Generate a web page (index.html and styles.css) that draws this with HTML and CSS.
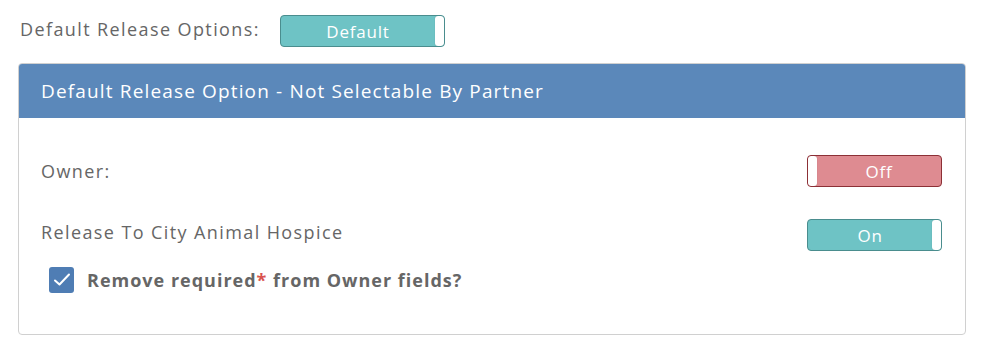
FILE: index.html
```html
<!DOCTYPE html>
<html>
<head>
<meta charset="utf-8">
<link rel="stylesheet" href="styles.css">
</head>
<body>
<div class="page">
  <div class="top-row">
    <span class="top-label">Default Release Options:</span>
    <div class="toggle toggle-teal toggle-default">
      <span class="toggle-text">Default</span>
      <span class="knob"></span>
    </div>
  </div>
  <div class="panel">
    <div class="panel-header">Default Release Option - Not Selectable By Partner</div>
    <div class="panel-body">
      <div class="row">
        <span class="row-label">Owner:</span>
        <div class="toggle toggle-red toggle-wide">
          <span class="knob"></span>
          <span class="toggle-text">Off</span>
        </div>
      </div>
      <div class="row">
        <span class="row-label row-label-high">Release To City Animal Hospice</span>
        <div class="toggle toggle-teal toggle-wide">
          <span class="toggle-text">On</span>
          <span class="knob"></span>
        </div>
      </div>
      <div class="check-row">
        <span class="checkbox">
          <svg width="20" height="20" viewBox="0 0 20 20"><path d="M3 10.5 L7.5 14.5 L17 4.5" fill="none" stroke="#fff" stroke-width="2" stroke-linecap="round" stroke-linejoin="round"/></svg>
        </span>
        <span class="check-label">Remove required<span class="req">*</span> from Owner fields?</span>
      </div>
    </div>
  </div>
</div>
</body>
</html>
```
FILE: styles.css
```css
* { box-sizing: border-box; }
html, body { margin: 0; padding: 0; background: #fff; }
body { font-family: "Open Sans", "DejaVu Sans", sans-serif; color: #666; }
.page { padding: 15px 32px 0 18px; }
.top-row { display: flex; align-items: center; height: 32px; padding-left: 2px; }
.top-label { font-size: 18px; letter-spacing: 1.4px; color: #666; width: 260px; margin-bottom: 4px; }
.toggle {
  display: flex; align-items: stretch; height: 32px;
  border: 1px solid; border-radius: 4px; overflow: hidden;
  color: #fff; font-size: 17px; letter-spacing: 0.8px;
}
.toggle-default { width: 165px; }
.toggle-wide { width: 135px; }
.toggle-teal { background: #6ec3c5; border-color: #4a8d8e; }
.toggle-red { background: #de8b91; border-color: #8c3036; }
.toggle-text { flex: 1; display: flex; align-items: center; justify-content: center; }
.knob { width: 9px; background: #fff; border-radius: 3px; box-shadow: 0 0 1px rgba(0,0,0,0.25); }
.panel {
  margin-top: 16px; width: 948px; height: 272px;
  border: 1px solid #d0d0d0; border-radius: 4px; overflow: hidden;
}
.panel-header {
  background: #5b88ba; height: 54px; display: flex; align-items: center;
  padding-left: 22px; color: #fff; font-size: 19px; letter-spacing: 1.15px;
}
.panel-body { padding: 37px 23px 0 22px; }
.row { display: flex; justify-content: space-between; align-items: center; height: 32px; margin-bottom: 32px; }
.row-label { font-size: 18px; letter-spacing: 1.4px; color: #666; }
.row-label-high { margin-bottom: 6px; }
.check-row { display: flex; align-items: center; margin-top: -16px; padding-left: 8px; }
.checkbox {
  width: 25px; height: 26px; background: #4f7db4; border-radius: 3px;
  display: flex; align-items: center; justify-content: center; margin-right: 13px;
}
.check-label { font-size: 18px; font-weight: 700; letter-spacing: 1px; color: #666; }
.req { color: #d9534f; }
```
